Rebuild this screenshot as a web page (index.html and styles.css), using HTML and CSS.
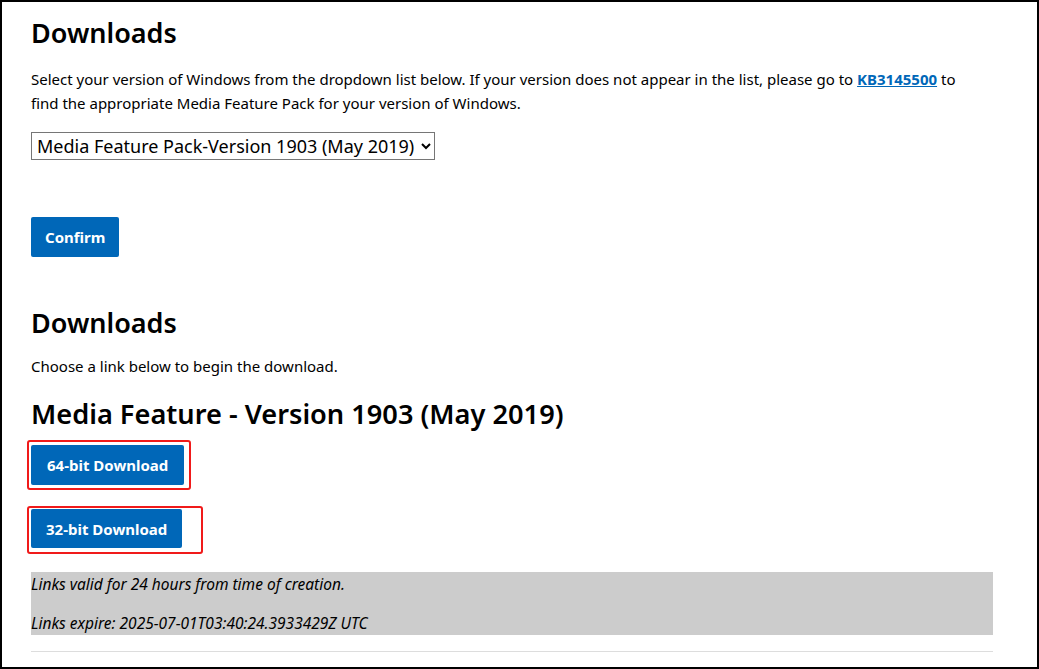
FILE: index.html
```html
<!DOCTYPE html>
<html lang="en">
<head>
<meta charset="utf-8">
<title>Downloads</title>
<link rel="stylesheet" href="styles.css">
</head>
<body>
<div class="frame">
  <main class="content">
    <section class="select-section">
      <h2 class="heading">Downloads</h2>
      <p class="intro">Select your version of Windows from the dropdown list below. If your version does not appear in the list, please go to <a class="kb-link" href="#">KB3145500</a> to find the appropriate Media Feature Pack for your version of Windows.</p>
      <select class="version-select">
        <option>Media Feature Pack-Version 1903 (May 2019)</option>
      </select>
      <div class="confirm-row">
        <button class="btn" type="button">Confirm</button>
      </div>
    </section>

    <section class="download-section">
      <h2 class="heading">Downloads</h2>
      <p class="choose">Choose a link below to begin the download.</p>
      <h3 class="sub-heading">Media Feature - Version 1903 (May 2019)</h3>
      <div class="dl-row">
        <button class="btn btn-dl" type="button">64-bit Download</button>
        <span class="mark mark-64"></span>
      </div>
      <div class="dl-row">
        <button class="btn btn-dl" type="button">32-bit Download</button>
        <span class="mark mark-32"></span>
      </div>
      <div class="validity">
        <p>Links valid for 24 hours from time of creation.</p>
        <p>Links expire: 2025-07-01T03:40:24.3933429Z UTC</p>
      </div>
      <hr class="rule">
    </section>
  </main>
</div>
</body>
</html>
```

FILE: styles.css
```css
* { box-sizing: border-box; }
html, body { margin: 0; padding: 0; }
body {
  font-family: "Noto Sans", "Open Sans", sans-serif;
  color: #000;
  background: #fff;
}
.frame {
  width: 1039px;
  height: 669px;
  border: 2px solid #000;
  overflow: hidden;
}
.content {
  padding: 0 0 0 29px;
  width: 964px;
  box-sizing: content-box;
}
.heading {
  font-size: 27px;
  font-weight: 600;
  margin: 0;
  line-height: 36px;
}
.select-section .heading { margin-top: 13px; }
.intro {
  font-size: 15px;
  line-height: 24px;
  width: 940px;
  margin: 16px 0 17px 0;
}
.kb-link {
  color: #0067b8;
  font-weight: 700;
}
.version-select {
  font-family: inherit;
  font-size: 18px;
  height: 28px;
  width: 404px;
  border: 1px solid #767676;
  border-radius: 0;
  background: #fff;
  color: #000;
  padding: 0 0 0 1px;
  margin: 0;
}
.confirm-row { margin-top: 57px; }
.btn {
  background: #0067b8;
  color: #fff;
  border: none;
  border-radius: 2px;
  font-family: inherit;
  font-size: 15px;
  font-weight: 700;
  padding: 0 14px;
  height: 40px;
  cursor: pointer;
}
.download-section { margin-top: 48px; }
.choose {
  font-size: 15px;
  line-height: 24px;
  margin: 13px 0 19px 0;
}
.sub-heading {
  font-size: 27.2px;
  font-weight: 600;
  margin: 0;
  line-height: 34px;
}
.dl-row {
  position: relative;
  margin-top: 14px;
  display: flex;
}
.dl-row + .dl-row { margin-top: 24px; }
.btn-dl { height: 40px; padding: 0 16px; }
.dl-row + .dl-row .btn-dl { padding: 0 15px; height: 39px; }
.mark {
  position: absolute;
  border: 2px solid #f01a1a;
  border-radius: 3px;
  pointer-events: none;
}
.mark-64 { left: -4px; top: -5px; width: 164px; height: 50px; }
.mark-32 { left: -4px; top: -3px; width: 176px; height: 48px; }
.validity {
  margin-top: 24px;
  background: #cccccc;
  width: 962px;
  padding: 0;
  font-style: italic;
  font-size: 15.5px;
  line-height: 24px;
}
.validity p { margin: 0 0 15px 0; padding: 0; }
.validity p:last-child { margin-bottom: 0; }
.rule {
  border: none;
  border-top: 1px solid #dddddd;
  margin: 16px 0 0 0;
  width: 962px;
}
```
